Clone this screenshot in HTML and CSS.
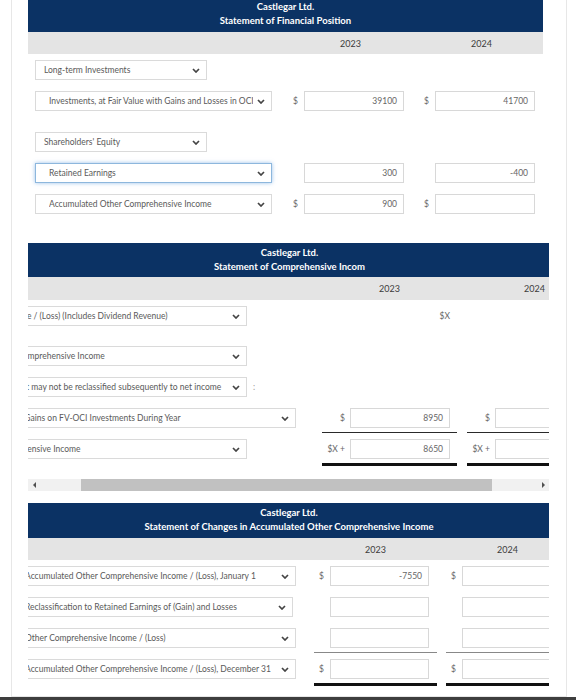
FILE: index.html
```html
<!DOCTYPE html>
<html lang="en">
<head>
<meta charset="utf-8">
<title>Castlegar Ltd.</title>
<link rel="stylesheet" href="styles.css">
</head>
<body>
<div class="card">

  <section class="stmt fp">
    <div class="title"><div>Castlegar Ltd.</div><div>Statement of Financial Position</div></div>
    <div class="rows">
      <div class="row years"><span></span><span class="yr">2023</span><span></span><span class="yr">2024</span></div>
      <div class="row">
        <div class="lbl"><div class="sel narrow"><span class="txt">Long-term Investments</span><svg class="chev" viewBox="0 0 8 5" width="8" height="5"><path d="M1 1l3 3 3-3"/></svg></div></div>
      </div>
      <div class="row">
        <div class="lbl"><div class="sel wide"><span class="txt">Investments, at Fair Value with Gains and Losses in OCI</span><svg class="chev" viewBox="0 0 8 5" width="8" height="5"><path d="M1 1l3 3 3-3"/></svg></div></div>
        <div class="amt"><span class="cur">$</span><span class="inp">39100</span></div>
        <span></span>
        <div class="amt"><span class="cur">$</span><span class="inp">41700</span></div>
      </div>
      <div class="row spaced">
        <div class="lbl"><div class="sel narrow"><span class="txt">Shareholders' Equity</span><svg class="chev" viewBox="0 0 8 5" width="8" height="5"><path d="M1 1l3 3 3-3"/></svg></div></div>
      </div>
      <div class="row">
        <div class="lbl"><div class="sel wide focus"><span class="txt">Retained Earnings</span><svg class="chev" viewBox="0 0 8 5" width="8" height="5"><path d="M1 1l3 3 3-3"/></svg></div></div>
        <div class="amt"><span class="cur"></span><span class="inp">300</span></div>
        <span></span>
        <div class="amt"><span class="cur"></span><span class="inp">-400</span></div>
      </div>
      <div class="row">
        <div class="lbl"><div class="sel wide"><span class="txt">Accumulated Other Comprehensive Income</span><svg class="chev" viewBox="0 0 8 5" width="8" height="5"><path d="M1 1l3 3 3-3"/></svg></div></div>
        <div class="amt"><span class="cur">$</span><span class="inp">900</span></div>
        <span></span>
        <div class="amt"><span class="cur">$</span><span class="inp"></span></div>
      </div>
    </div>
  </section>

  <section class="stmt ci">
    <div class="scroller">
      <div class="inner">
        <div class="title t2"><div>Castlegar Ltd.</div><div>Statement of Comprehensive Incom</div></div>
        <div class="rows">
          <div class="row years"><span></span><span class="yr">2023</span><span></span><span class="yr">2024</span></div>
          <div class="row">
            <div class="lbl"><div class="sel s263 sh5"><span class="txt">Net Income / (Loss) (Includes Dividend Revenue)</span><svg class="chev" viewBox="0 0 8 5" width="8" height="5"><path d="M1 1l3 3 3-3"/></svg></div></div>
            <div class="amt"><span class="cur"></span><span class="plain">$X</span></div>
          </div>
          <div class="row gap9">
            <div class="lbl"><div class="sel s263"><span class="txt">Other Comprehensive Income</span><svg class="chev" viewBox="0 0 8 5" width="8" height="5"><path d="M1 1l3 3 3-3"/></svg></div></div>
          </div>
          <div class="row">
            <div class="lbl"><div class="sel s263 sh1"><span class="txt">Items that may not be reclassified subsequently to net income</span><svg class="chev" viewBox="0 0 8 5" width="8" height="5"><path d="M1 1l3 3 3-3"/></svg></div><span class="colon">:</span></div>
          </div>
          <div class="row">
            <div class="lbl"><div class="sel s312"><span class="txt">Holding Gains on FV-OCI Investments During Year</span><svg class="chev" viewBox="0 0 8 5" width="8" height="5"><path d="M1 1l3 3 3-3"/></svg></div></div>
            <div class="amt ul1"><span class="cur">$</span><span class="inp">8950</span></div>
            <span></span>
            <div class="amt ul1"><span class="cur">$</span><span class="inp"></span></div>
          </div>
          <div class="row">
            <div class="lbl"><div class="sel s263"><span class="txt">Comprehensive Income</span><svg class="chev" viewBox="0 0 8 5" width="8" height="5"><path d="M1 1l3 3 3-3"/></svg></div></div>
            <div class="amt ul3"><span class="cur">$X +</span><span class="inp">8650</span></div>
            <span></span>
            <div class="amt ul3"><span class="cur">$X +</span><span class="inp"></span></div>
          </div>
        </div>
      </div>
    </div>
    <div class="hscroll">
      <span class="arrow left"></span>
      <div class="track"><div class="thumb"></div></div>
      <span class="arrow right"></span>
    </div>
  </section>

  <section class="stmt aoci">
    <div class="scroller">
      <div class="inner">
        <div class="title t3"><div>Castlegar Ltd.</div><div>Statement of Changes in Accumulated Other Comprehensive Income</div></div>
        <div class="rows">
          <div class="row years"><span></span><span class="yr">2023</span><span></span><span class="yr">2024</span></div>
          <div class="row">
            <div class="lbl"><div class="sel s280"><span class="txt">Accumulated Other Comprehensive Income / (Loss), January 1</span><svg class="chev" viewBox="0 0 8 5" width="8" height="5"><path d="M1 1l3 3 3-3"/></svg></div></div>
            <div class="amt"><span class="cur">$</span><span class="inp">-7550</span></div>
            <span></span>
            <div class="amt"><span class="cur">$</span><span class="inp"></span></div>
          </div>
          <div class="row">
            <div class="lbl"><div class="sel s277"><span class="txt">Reclassification to Retained Earnings of (Gain) and Losses</span><svg class="chev" viewBox="0 0 8 5" width="8" height="5"><path d="M1 1l3 3 3-3"/></svg></div></div>
            <div class="amt"><span class="cur"></span><span class="inp"></span></div>
            <span></span>
            <div class="amt"><span class="cur"></span><span class="inp"></span></div>
          </div>
          <div class="row">
            <div class="lbl"><div class="sel s280"><span class="txt">Other Comprehensive Income / (Loss)</span><svg class="chev" viewBox="0 0 8 5" width="8" height="5"><path d="M1 1l3 3 3-3"/></svg></div></div>
            <div class="amt ulg"><span class="cur"></span><span class="inp"></span></div>
            <span></span>
            <div class="amt ulg"><span class="cur"></span><span class="inp"></span></div>
          </div>
          <div class="row">
            <div class="lbl"><div class="sel s280"><span class="txt">Accumulated Other Comprehensive Income / (Loss), December 31</span><svg class="chev" viewBox="0 0 8 5" width="8" height="5"><path d="M1 1l3 3 3-3"/></svg></div></div>
            <div class="amt ul3"><span class="cur">$</span><span class="inp"></span></div>
            <span></span>
            <div class="amt ul3"><span class="cur">$</span><span class="inp"></span></div>
          </div>
        </div>
      </div>
    </div>
  </section>

</div>
<div class="bottombar"></div>
</body>
</html>
```

FILE: styles.css
```css
* { box-sizing: border-box; margin: 0; padding: 0; }
html, body { background: #fff; }
body {
  font-family: Lato, "Open Sans", "Liberation Sans", sans-serif;
  font-size: 8.5px;
  color: #5a5a5a;
  overflow: hidden;
}

.card {
  margin: -20px 9px 0 11px;
  border: 1px solid #e7e7e7;
  padding: 16px 17px 10px 16px;
}

.title {
  background: #0b3264;
  color: #fff;
  font-weight: 700;
  font-size: 9.5px;
  line-height: 14px;
  text-align: center;
  padding: 3px 0 4px;
}
.t2 { padding: 3px 0 3px; }
.t3 { padding: 3px 0 4px; }

.rows { display: flex; flex-direction: column; gap: 6px; }

.row { display: grid; align-items: start; }
.fp .row { grid-template-columns: 261px 115px 16px 115px; }
.ci .row { grid-template-columns: 345px 135px 10px 135px; }
.aoci .row { grid-template-columns: 305px 123px 9px 123px; }

.fp { margin-right: 6px; }
.spaced { margin-top: 10px; }
.gap9 { margin-top: 9px; }

.years {
  height: 22px;
  background: #e4e4e4;
  align-items: center;
  color: #3c3c3c;
  font-size: 9px;
}
.ci .years { height: 23px; }
.yr { text-align: center; }
.fp .yr { padding-left: 8px; }

.lbl { padding: 0 0 5px 7px; display: flex; align-items: center; }

.sel {
  height: 20px;
  border: 1px solid #dadada;
  background: #fff;
  display: flex;
  align-items: center;
  padding: 0 6px 0 8px;
  gap: 4px;
  color: #5a5a5a;
}
.sel .txt { flex: 1; min-width: 0; white-space: nowrap; overflow: hidden; }
.sel.sh5 .txt { text-indent: -5px; }
.sel.sh1 .txt { text-indent: -1.5px; }
.sel.narrow { width: 172px; }
.sel.wide { width: 237px; padding-left: 13px; }
.sel.s263 { width: 263px; }
.sel.s312 { width: 312px; }
.sel.s280 { width: 280px; }
.sel.s277 { width: 277px; }
.sel.focus {
  border-color: #8db7dd;
  box-shadow: 0 0 4px rgba(102, 160, 225, 0.65);
}
.chev { flex: none; }
.chev path { fill: none; stroke: #444; stroke-width: 1.7; }

.colon { color: #999; margin-left: 6px; }

.amt {
  display: flex;
  padding-bottom: 4px;
  border-bottom: 1px solid transparent;
}
.cur {
  text-align: right;
  line-height: 20px;
  color: #666;
  white-space: nowrap;
}
.fp .cur { width: 15px; padding-right: 6px; }
.ci .cur { width: 28px; padding-right: 5px; }
.aoci .cur { width: 16px; padding-right: 6px; }
.ci .amt { padding-right: 7px; }
.aoci .amt { padding-right: 8px; }

.inp {
  width: 100px;
  height: 20px;
  border: 1px solid #d8d8d8;
  background: #fff;
  text-align: right;
  padding-right: 6px;
  line-height: 18px;
  color: #666;
}
.aoci .inp { width: 99px; }
.plain { width: 103px; text-align: right; line-height: 20px; color: #666; }

.ul1 { border-bottom: 1px solid #2a2a2a; }
.ulg { border-bottom: 1px solid #888; }
.ul3 { border-bottom: 3px solid #111; }

.ci { margin-top: 24px; }
.aoci { margin-top: 12px; }

.scroller { overflow: hidden; }
.ci .inner { width: 625px; margin-left: -51px; }
.aoci .inner { width: 560px; margin-left: -19px; }

.hscroll {
  margin-top: 13px;
  height: 12px;
  background: #f1f1f1;
  display: flex;
}
.arrow { width: 12px; flex: none; display: flex; align-items: center; justify-content: center; }
.arrow::before { content: ""; width: 0; height: 0; border-top: 3px solid transparent; border-bottom: 3px solid transparent; }
.arrow.left::before { border-right: 3px solid #505050; }
.arrow.right::before { border-left: 3px solid #505050; }
.track { flex: 1; display: flex; }
.thumb { margin-left: 41px; width: 411px; background: #c1c1c1; }

.bottombar { height: 3px; background: #3e3e3e; margin-top: 0; }
```
